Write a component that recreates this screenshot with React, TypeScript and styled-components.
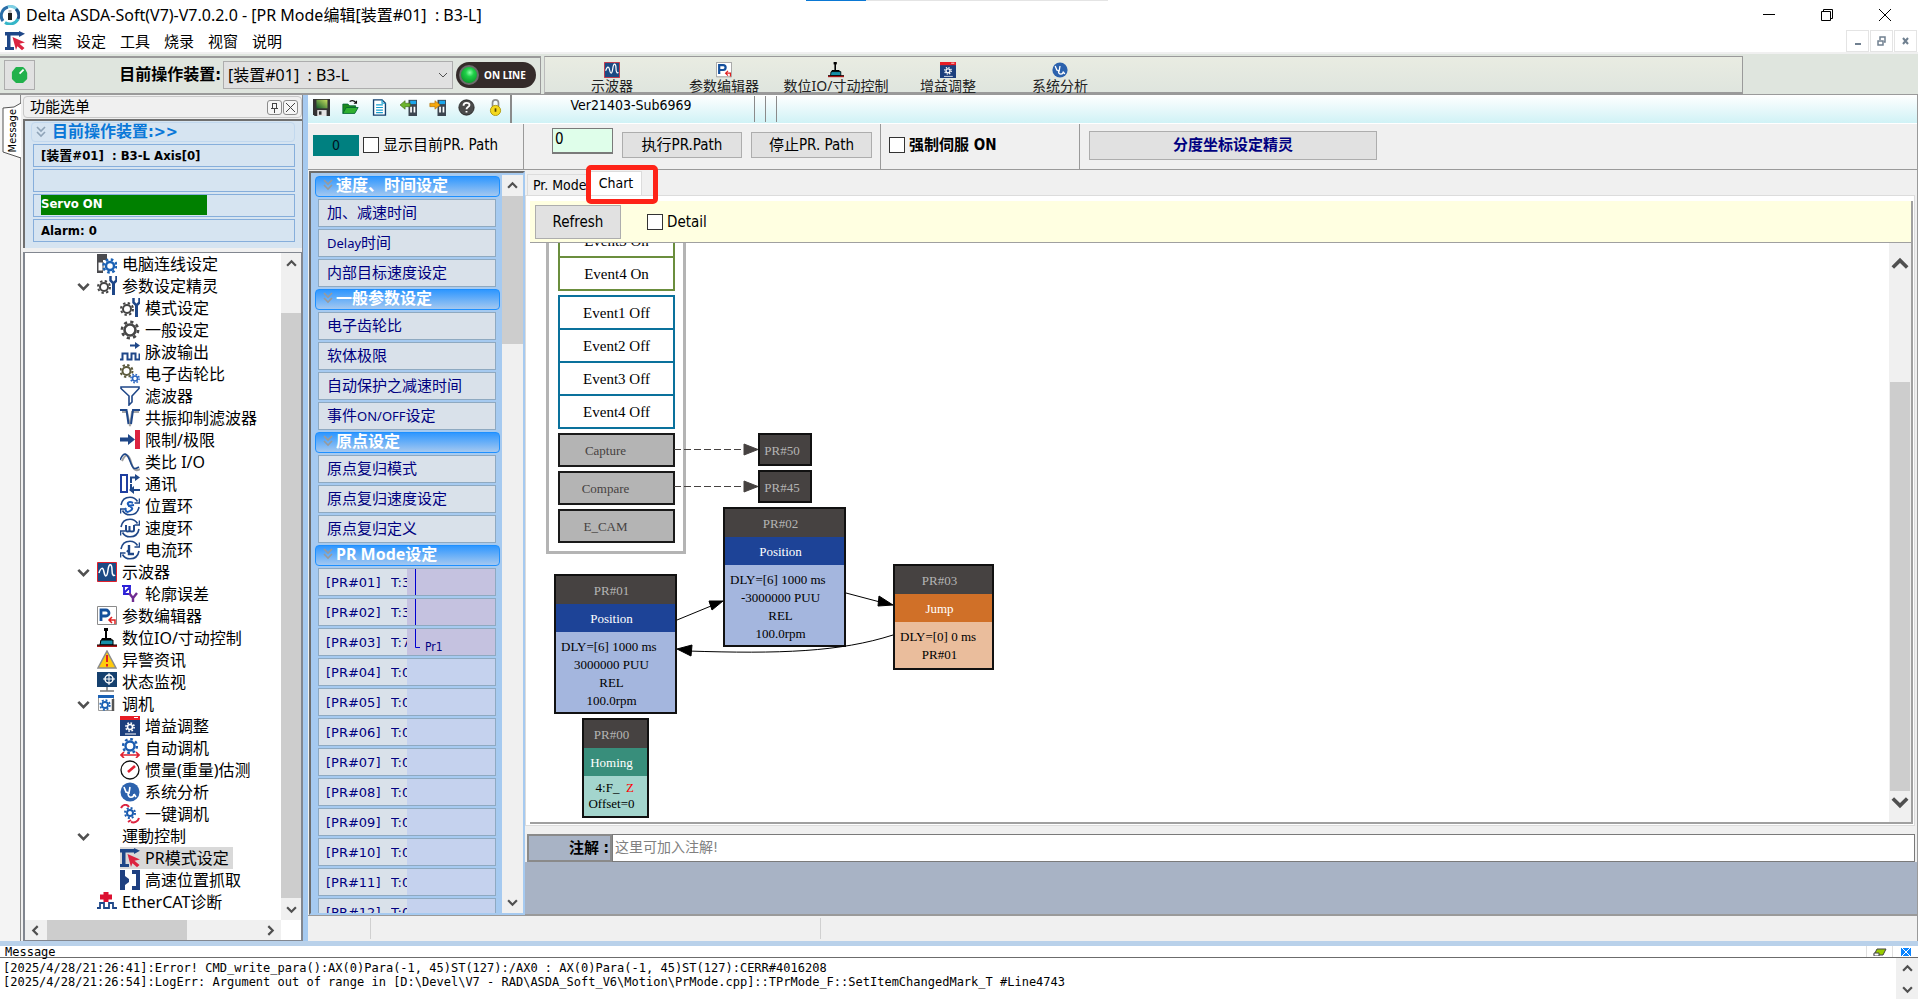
import React from 'react';
import styled, { createGlobalStyle, css } from 'styled-components';

const UI = `'DejaVu Sans Condensed', 'Noto Sans', 'Noto Sans CJK SC', sans-serif`;
const SANS = `'Noto Sans', 'Noto Sans CJK SC', sans-serif`;
const SERIF = `'Liberation Serif', serif`;
const MONO = `'DejaVu Sans Mono', 'Noto Sans CJK SC', monospace`;

const GlobalStyle = createGlobalStyle`
  *, *::before, *::after { box-sizing: border-box; }
  body { margin: 0; background: #f0f0f0; font-family: ${SANS}; font-size: 16px; line-height: 20px; color: #000; }
  button, input, select { font: inherit; color: inherit; border-radius: 0; margin: 0; padding: 0; }
  ul { list-style: none; margin: 0; padding: 0; }
  svg { display: block; flex: none; }
`;

/* ---------- icons ---------- */

const Gear = ({ cx, cy, r, c, w = 2 }: { cx: number; cy: number; r: number; c: string; w?: number }) => (
  <g fill="none" stroke={c}>
    <circle cx={cx} cy={cy} r={r} strokeWidth={w} />
    <circle cx={cx} cy={cy} r={r + w} strokeWidth={w} strokeDasharray={`${((r + w) * Math.PI) / 8} ${((r + w) * Math.PI) / 8}`} />
  </g>
);

const NAVY = '#1f4788';

const Loop = ({ children }: { children: React.ReactNode }) => (
  <g fill="none" stroke={NAVY} strokeWidth="1.6">
    <path d="M1 9C2 3.500 6 1.200 10 1.200c3.500 0 6 1.600 7.500 4.300M19.500 2.500v4.500h-5M19 11c-1 5.500-5 7.800-9 7.800-3.500 0-6-1.600-7.500-4.300M.5 17.500V13h5" />
    {children}
  </g>
);

const icons: Record<string, React.ReactNode> = {
  pc: (<><path d="M0 0h10v6H6v13H0z" fill="#4a4a4e" /><path d="M1 8h5v9H1z" fill="#fff" stroke="#4a4a4e" /><Gear cx={13} cy={12} r={4} c="#1b62b5" w={2.500} /></>),
  wizard: (<><Gear cx={7} cy={11} r={4} c="#454545" /><path d="M16.500 7v12" stroke={NAVY} strokeWidth="3" /><path d="M13.500 0v4.500l3 3 3-3V0" fill="none" stroke={NAVY} strokeWidth="2.500" /></>),
  gear: <Gear cx={10} cy={10} r={5.500} c="#474747" w={2.600} />,
  pulse: (<><path d="M0 17.500h2.500v-6h5v6h4v-6h4v6h4v-6" fill="none" stroke={NAVY} strokeWidth="2" /><path d="M10 2.500h5V0l5 3.500L15 7V4.500h-5z" fill={NAVY} /></>),
  gears: (<><Gear cx={6.500} cy={7} r={4} c="#5c5a3c" /><Gear cx={15} cy={14.500} r={2.500} c="#2a65c0" w={1.600} /></>),
  filter: <path d="M1 1h18v1.500L12 10v6l-3 3v-9L1 2.500z" fill="#fff" stroke={NAVY} strokeWidth="1.600" />,
  notch: (<><path d="M2 4h5l3 14 2-14h7" fill="none" stroke="#a8a8a8" strokeWidth="2" /><path d="M0 2h6.500L8.500 16M20 2h-7L11 16" fill="none" stroke={NAVY} strokeWidth="2" /></>),
  limit: (<><path d="M0 7.500h8V4l7 5.500L8 15v-3.500H0z" fill={NAVY} /><path d="M15 0h5v19h-5z" fill="#dc2440" /></>),
  sine: (<><path d="M2 9c4-9 7-6 9 1s4 10 9 7" fill="none" stroke="#a0a0a0" strokeWidth="2" /><path d="M0 8C4-1 7 1 10 9s4 9 9 6" fill="none" stroke={NAVY} strokeWidth="1.600" /></>),
  comm: (<><path d="M1 1h6v17H1z" fill="#fff" stroke="#1f3fa0" strokeWidth="2" /><path d="M11 9V3.500h5M11 10v6h9" fill="none" stroke={NAVY} strokeWidth="2" /><path d="M15 0l5 3.500L15 7zM14 12l-5 4 5 4z" fill={NAVY} /></>),
  posLoop: <Loop><path d="M13 7c-4-2-7 0-4 2.500s5 3 1 5.500-5-1-4-3M8 10l6-1" strokeWidth="2" stroke="#1b5cb8" /></Loop>,
  spdLoop: <Loop><path d="M6 7v5c0 2 3.500 2 3.500 0V8M9.500 12c0 2 4.500 2 4.500 0V7" strokeWidth="2" /></Loop>,
  curLoop: <Loop><path d="M9 5v9h5M9 14v-4l-2 2" strokeWidth="2.400" /></Loop>,
  scope: (<><path d="M.5.500h19v19H.5z" fill="#1c4a84" stroke="#e0202c" /><path d="M2 11c2-6 4-6 5-1s3 6 4-2 4-6 4 0 2 6 3 5" fill="none" stroke="#fff" strokeWidth="1.500" /></>),
  contour: (<><path d="M2 2h9M3 10h8M4 2v8M10 2v8M4 9l6-6" fill="none" stroke="#2b20d8" strokeWidth="1.800" /><path d="M9 9l4 5 4-5M13 13v5" fill="none" stroke="#6f2c91" strokeWidth="2.400" /></>),
  param: (<><path d="M.5.500h19v18H.5z" fill="#fff" stroke="#8b8b8b" /><path d="M4 15V4h5a2.500 2.500 0 0 1 0 6H4" fill="none" stroke="#14509c" strokeWidth="2.800" /><path d="M18 18v-4h-5m2-3l-3 3 3 3" fill="none" stroke="#e02020" strokeWidth="1.500" /></>),
  io: (<><path d="M9 1v9" stroke="#000" strokeWidth="2" /><path d="M7 0h4v3H7z" /><path d="M5 10h9l2 4H3z" /><path d="M4 12h12v5H3z" fill="#1490a8" stroke="#000" /><path d="M0 18h20" stroke="#b01818" strokeWidth="2" /><path d="M0 17h20" stroke="#000" /></>),
  alarm: (<><path d="M10 1l9 17H1z" fill="#ffcb0b" stroke="#8c8c8c" strokeWidth="1.500" /><path d="M10 5v7m0 2v2.500" stroke="#e02020" strokeWidth="2" /></>),
  monitor: (<><path d="M0 0h20v15H0z" fill="#15406e" /><circle cx="12" cy="7" r="4" fill="none" stroke="#fff" strokeWidth="1.500" /><path d="M12 1v12M6 7h12" stroke="#fff" /><path d="M10 15v4M3 19h14" stroke="#777" strokeWidth="1.500" /></>),
  tune: (<><path d="M1.500 1.500h15v15h-15z" fill="#fff" stroke="#999" /><path d="M1 1h16v3H1z" fill="#1b62b5" /><Gear cx={8} cy={11} r={3} c="#1b62b5" w={1.800} /><path d="M16 5v12" stroke="#555" strokeWidth="2.500" /></>),
  gain: (<><path d="M0 0h20v20H0z" fill="#1c3f7d" /><path d="M0 0h20v4H0z" fill="#e81c24" /><path d="M14 1.500h4" stroke="#fff" /><Gear cx={10} cy={11} r={2.500} c="#fff" w={1.600} /><path d="M5 18h11" stroke="#fff" /></>),
  auto: (<><Gear cx={10} cy={8} r={4.500} c="#1b5cb0" w={2.400} /><path d="M1 17h18M4 14l-3 3 3 3M16 14l3 3-3 3" fill="none" stroke="#e02030" strokeWidth="1.600" /></>),
  inertia: (<><circle cx="10" cy="10" r="9" fill="#fff" stroke="#111" strokeWidth="1.300" /><path d="M8 12l7-6" stroke="#e02030" strokeWidth="2.600" /></>),
  analysis: (<><circle cx="10" cy="10" r="9.500" fill="#2c62ad" /><path d="M4 5l2 5 3 1 1-6M8 11c0 6 6 5 6 1m0 0l2 3" fill="none" stroke="#fff" strokeWidth="1.600" /></>),
  oneKey: (<><Gear cx={10} cy={9} r={3} c="#1b5cb0" w={2} /><path d="M1 4C3 0 7 0 9 3M19 14c-1 4-5 5-8 4M8 18l3-2" fill="none" stroke="#dc2440" strokeWidth="2" /></>),
  pr: (<><path d="M0 1h16v3.500H5.500V16H9v3H0v-3h2V4.500H0z" fill={NAVY} /><path d="M14 0l6 2.800L14 6z" fill={NAVY} /><path d="M7.500 6L20 11.500l-5.500 1.200 5 4.300-2.500 2.200-4.600-4L11 19z" fill="#dc2440" /></>),
  capture: (<><path d="M0 0h5v6l4 3v3l-4 3v5H0z" fill="#1f4080" /><path d="M12 2h6v16h-6" fill="none" stroke="#1f4080" strokeWidth="4" /></>),
  ethercat: (<><path d="M9 0v10M3 5h12" stroke="#dc1030" strokeWidth="5" /><path d="M0 16h3v-5h4v5h5v-5h4v5h4" fill="none" stroke={NAVY} strokeWidth="1.800" /></>),
  save: (
    <>
      <defs><linearGradient id="disk" x1="0" y1="1" x2="1" y2="0"><stop offset="0" stopColor="#0f5a2a" /><stop offset="1" stopColor="#c8e060" /></linearGradient></defs>
      <path d="M0 0h20v20H2l-2-2z" fill="#333" /><path d="M4 1h13v10H4z" fill="url(#disk)" /><path d="M5 13h11v7H5z" fill="#e4e4e4" /><path d="M7 14.500h3v4H7z" fill="#333" />
    </>
  ),
  open: (<><path d="M1 17V6h6l2 2h7v3" fill="#1d8a1d" stroke="#063" /><path d="M1 17l4-7h14l-4 7z" fill="#30b030" stroke="#063" /><path d="M9 3c3-2 6-1 8 2m0-3v3h-3" fill="none" stroke="#111" strokeWidth="1.400" /></>),
  doc: (<><path d="M3 1h10l4 4v14H3z" fill="#fff" stroke="#12406f" strokeWidth="1.600" /><path d="M13 1v4h4M6 7h8M6 10h8M6 13h8M6 16h8" fill="none" stroke="#18a0d0" strokeWidth="1.400" /></>),
  readIn: (<><path d="M10 1h10v19H10z" fill="#3d4650" /><path d="M12 2h7v4h-7z" fill="#1aa7ec" /><path d="M12 9h2v7h-2zM16 9h2v7h-2z" fill="#fff" /><path d="M0 7l6-5v3h6v4H6v3z" fill="#6cb52d" stroke="#3c6414" strokeWidth=".7" /></>),
  writeOut: (<><path d="M10 1h10v19H10z" fill="#3d4650" /><path d="M12 2h7v4h-7z" fill="#1aa7ec" /><path d="M12 9h2v7h-2zM16 9h2v7h-2z" fill="#fff" /><path d="M13 7L7 2v3H1v4h6v3z" fill="#f5a80c" stroke="#a60" strokeWidth=".7" /></>),
  help: (<><circle cx="10" cy="10" r="9" fill="#4a4a4a" stroke="#222" /><path d="M6.500 8c0-5 7-4 7-1 0 2.500-3.500 2.500-3.500 5m0 2v2" fill="none" stroke="#fff" strokeWidth="2.200" /></>),
  lock: (<><path d="M6.500 9V4.500a3.500 3.500 0 0 1 7 0V9" fill="none" stroke="#8c8c8c" strokeWidth="2" /><circle cx="10" cy="13.500" r="6" fill="#f4d81c" stroke="#a89000" /><path d="M10 11v4" stroke="#554400" strokeWidth="2" /></>),
  logo: (<><path d="M8 2A9 9 0 0 0 3 16" fill="none" stroke="#2a6ea8" strokeWidth="3" /><path d="M5 17.500A9 9 0 0 0 18 14" fill="none" stroke="#35b6c8" strokeWidth="3" /><path d="M19 11A9 9 0 0 0 8 1.500" fill="none" stroke="#7fd0e4" strokeWidth="3" /><path d="M16 4a9 9 0 0 1 2 10" fill="none" stroke="#1d5088" strokeWidth="3" /><path d="M10 5v3" stroke="#bbb" strokeWidth="3" /><path d="M10 8v7" stroke="#222" strokeWidth="4" /></>),
  ready: (<><path d="M6 2h7l2 2 2 4v6l-4 4H6l-4-4V7z" fill="#22b14c" stroke="#22b14c" strokeWidth="2" strokeLinejoin="round" /><path d="M9.500 8.500L14 4" stroke="#fff" strokeWidth="2" /></>),
};

const Icon = ({ name, size = 20 }: { name: string; size?: number }) => (
  <svg width={size} height={size} viewBox="0 0 20 20" aria-hidden="true">{icons[name]}</svg>
);

const Chevron = ({ dir, w = 10, s = 2 }: { dir: 'up' | 'down' | 'left' | 'right'; w?: number; s?: number }) => {
  const angle = { down: 0, up: 180, left: 90, right: 270 }[dir];
  return (
    <svg width={w} height={w} viewBox="0 0 10 10" aria-hidden="true">
      <path d="M1 3l4 4 4-4" fill="none" stroke="#505050" strokeWidth={s} transform={`rotate(${angle} 5 5)`} />
    </svg>
  );
};

const DoubleChevron = ({ color }: { color: string }) => (
  <svg width="10" height="12" viewBox="0 0 10 12" aria-hidden="true">
    <path d="M1 1l4 4 4-4M1 6l4 4 4-4" fill="none" stroke={color} strokeWidth="1.600" />
  </svg>
);

/* ---------- window frame ---------- */

const Window = styled.div`
  display: flex; flex-direction: column; height: 100vh; overflow: hidden; background: #fff;
`;
const TitleBar = styled.header`
  position: relative; display: flex; align-items: center; height: 30px; padding-right: 17px; gap: 6px; flex: none;
  h1 { flex: 1; margin: 0; font: 400 16px/20px ${SANS}; white-space: pre; }
`;
const LoadStrip = styled.div`
  position: absolute; top: 0; left: 42%; width: 302px; height: 1px; background: #e4e4e4;
  &::before { content: ''; display: block; width: 60px; height: 1px; background: #0a78d4; }
`;
const WindowButtons = styled.div`display: flex; gap: 26px;`;
const WindowButton = styled.button`
  display: grid; place-items: center; width: 32px; height: 28px; border: 0; background: none;
`;
const MenuBar = styled.nav`
  display: flex; align-items: center; height: 24px; padding-left: 5px; flex: none; border-bottom: 2px solid #f0f0f0;
`;
const MenuList = styled.ul`display: flex; flex: 1; gap: 14px; padding-left: 7px;`;
const MenuItem = styled.button`border: 0; background: none; font: 15px/20px ${UI};`;
const MdiButton = styled.button`
  display: grid; place-items: center; width: 23px; height: 22px; margin-right: 1px; background: #fff; border: 1px solid #e4e4e4;
`;

const ToolStrip = styled.div`
  display: flex; height: 41px; padding-top: 2px; flex: none; background: #dfe5de; border-bottom: 1px solid #9a9a9a;
`;
const DeviceBar = styled.div`
  display: flex; align-items: center; width: 541px; flex: none; padding: 0 4px 2px; background: #dfe5de;
  border: 1px solid #9a9a9a; border-top-width: 2px; border-left: 0;
  label { flex: 1; text-align: right; font: 700 16px/20px ${UI}; padding-right: 2px; }
`;
const ReadyButton = styled.button`
  display: grid; place-items: center; width: 31px; height: 30px; background: #e1e1e1; border: 1px solid #adadad;
`;
const SelectWrap = styled.div`
  position: relative; width: 230px; height: 28px;
  select { appearance: none; width: 100%; height: 100%; padding-left: 4px; background: #e1e1e1; border: 1px solid #adadad; font: 16px/20px ${SANS}; }
  svg { position: absolute; right: 5px; top: 9px; pointer-events: none; }
`;
const OnlinePill = styled.div`
  display: flex; align-items: center; gap: 5px; width: 80px; height: 26px; margin-left: 3px; padding: 0 3px; border-radius: 13px;
  background: #342b2a; color: #fff; font: 700 10px/14px ${SANS}; white-space: nowrap;
`;
const Lamp = styled.span`
  width: 20px; height: 20px; flex: none; border-radius: 50%; border: 2px solid #6c6c6c;
  background: radial-gradient(circle at 55% 35%, #8dffa8, #1fd048 30%, #067a20);
`;
const Launchers = styled.div`
  display: flex; width: 1199px; margin-left: 3px; padding-left: 11px; background: linear-gradient(#e9ece2, #dfe5de);
  border: 1px solid #9a9a9a; border-bottom-width: 2px; border-left: 1px solid #bbb;
`;
const Launcher = styled.button`
  display: flex; flex-direction: column; align-items: center; gap: 1px; width: 112px; padding-top: 5px; border: 0; background: none;
  font: 14px/14px ${SANS}; color: #222; white-space: nowrap;
`;

/* ---------- workspace ---------- */

const Workspace = styled.div`display: flex; flex: 1; min-height: 0;`;
const DockStrip = styled.div`
  width: 21px; flex: none; padding: 7px 0 0 2px; background: #f4f4f4; border-right: 1px solid #8a8a8a;
`;
const DockTab = styled.button`
  position: relative; display: grid; place-items: center; width: 19px; height: 57px; padding-left: 3px; border: 0; background: none;
  span { position: relative; writing-mode: vertical-rl; transform: rotate(180deg); font: 11px/14px 'DejaVu Sans Condensed', sans-serif; }
  svg { position: absolute; inset: 0; }
`;
const Sidebar = styled.aside`
  display: flex; flex-direction: column; width: 281px; flex: none; background: #f0f0f0; padding: 1px 0 0 2px;
`;
const SideHeader = styled.div`
  display: flex; align-items: center; height: 22px; flex: none; padding: 0 3px 0 6px; gap: 1px; border: 1px solid #c8c8c8; border-radius: 4px; background: #f0f0f0;
  h2 { flex: 1; margin: 0; font: 400 15px/20px ${UI}; }
`;
const SmallButton = styled.button`
  display: grid; place-items: center; width: 15px; height: 15px; background: #f6f6f6; border: 1px solid #8c8c8c; border-radius: 3px;
`;
const DeviceCard = styled.section`
  display: flex; flex-direction: column; gap: 2px; height: 129px; flex: none; margin-top: 1px; padding: 1px 7px 4px 6px; background: #d6e4f1;
  border-left: 2px solid #707070; border-top: 2px solid #707070; font: 700 13px/20px ${UI};
  h3 { display: flex; align-items: center; gap: 6px; height: 20px; margin: 0; padding-left: 4px; border: 1px solid #c2d8ee; border-radius: 4px; font: 700 16px/20px ${UI}; color: #0a78d8; }
`;
const DeviceRow = styled.div`
  height: 23px; flex: none; margin-left: 2px; padding: 0 7px; border: 1px solid #86aedb; white-space: pre; line-height: 21px;
`;
const ServoFlag = styled.span`
  display: block; width: 166px; height: 20px; background: #008000; color: #fff; line-height: 18px;
`;

const TreeBox = styled.div`
  display: grid; grid-template: minmax(0, 1fr) 20px / 1fr 20px; flex: 1; min-height: 0; margin-top: 4px; background: #fff;
  border: 1px solid #828790; border-left-width: 2px;
`;
const TreeList = styled.ul`overflow: hidden;`;
const TreeRow = styled.li<{ $level: number }>`
  display: flex; align-items: center; height: 22px; padding-left: ${p => (p.$level === 1 ? 52 : 75)}px;
`;
const Twisty = styled.span`display: grid; width: 20px; place-items: center start;`;
const TreeLabel = styled.button<{ $selected?: boolean }>`
  display: flex; align-items: center; height: 22px; gap: 5px; padding-right: 4px; border: 0; white-space: nowrap;
  background: ${p => (p.$selected ? '#d9d9d9' : 'none')};
  font: 16px/20px ${SANS};
`;

/* ---------- scroll bars ---------- */

const Bar = styled.div<{ $horizontal?: boolean }>`
  display: flex; flex-direction: ${p => (p.$horizontal ? 'row' : 'column')}; background: #f0f0f0; min-height: 0;
  button { display: grid; place-items: center; flex: none; border: 0; background: none; ${p => (p.$horizontal ? 'width: 21px;' : 'height: 21px;')} }
`;
const Track = styled.div<{ $before: number; $size: number; $after: number; $horizontal?: boolean }>`
  display: grid; flex: 1; min-height: 0;
  ${p => p.$horizontal
    ? css`grid-template-columns: ${p.$before}fr ${p.$size}fr ${p.$after}fr;`
    : css`grid-template-rows: ${p.$before}fr ${p.$size}fr ${p.$after}fr;`}
  &::before { content: ''; }
  &::after { content: ''; }
`;
const Thumb = styled.div`background: #cdcdcd;`;

const ScrollBar = ({ horizontal, before, size, after, big }: { horizontal?: boolean; before: number; size: number; after: number; big?: boolean }) => (
  <Bar $horizontal={horizontal}>
    <button aria-label="Scroll back"><Chevron dir={horizontal ? 'left' : 'up'} w={big ? 18 : 11} /></button>
    <Track $before={before} $size={size} $after={after} $horizontal={horizontal}><Thumb /></Track>
    <button aria-label="Scroll forward"><Chevron dir={horizontal ? 'right' : 'down'} w={big ? 18 : 11} /></button>
  </Bar>
);

/* ---------- main pane ---------- */

const VSplit = styled.div`width: 6px; flex: none; background: #a6caf0; border-left: 1px solid #828790;`;
const HSplit = styled.div`height: 5px; flex: none; background: #b9d1ea;`;
const Main = styled.main`
  display: flex; flex: 1; flex-direction: column; min-width: 0; background: #f0f0f0; border-right: 1px solid #9a9a9a;
`;
const VersionRow = styled.div`
  display: flex; height: 29px; flex: none; border-bottom: 1px solid #fff; background: linear-gradient(#fff, #d0f2f6);
`;
const IconTools = styled.div`
  display: flex; gap: 13px; width: 204px; height: 28px; padding: 3px 5px; border-right: 2px solid #8a8a8a;
`;
const IconButton = styled.button`border: 0; background: none; width: 16px; height: 18px;`;
const VersionText = styled.div`width: 242px; padding-right: 4px; text-align: center; font: 14px/20px ${UI};`;
const Ticks = styled.div`
  display: flex; gap: 10px; padding-top: 1px;
  span { width: 1px; height: 26px; background: #8a8a8a; }
`;

const PathRow = styled.div`
  display: flex; height: 46px; flex: none; border-bottom: 1px solid #9a9a9a; font: 15px/20px ${UI};
`;
const PathGroup = styled.div<{ $w?: number; $pad: number; $gap: number }>`
  display: flex; align-items: center; gap: ${p => p.$gap}px; padding: 0 0 3px ${p => p.$pad}px; white-space: nowrap;
  ${p => (p.$w ? css`width: ${p.$w}px; flex: none; border-right: 1px solid #9a9a9a;` : css`flex: 1;`)}
`;
const PathCounter = styled.output`
  width: 46px; height: 21px; margin-right: -4px; background: #008080; text-align: center; font-size: 14px; color: #012;
`;
const Check = styled.label<{ $bold?: boolean }>`
  display: flex; align-items: center; gap: 4px; font-weight: ${p => (p.$bold ? 700 : 400)};
  input { appearance: none; width: 16px; height: 16px; background: #fff; border: 1px solid #333; }
`;
const PathInput = styled.input`
  width: 61px; height: 26px; margin-bottom: 8px; padding: 0 2px 3px; background: #dffeea; border: 1px solid #7a7a7a; border-width: 1px 1px 2px 1px;
`;
const PushButton = styled.button<{ $w: number; $h: number; $strong?: boolean }>`
  width: ${p => p.$w}px; height: ${p => p.$h}px; background: #e1e1e1; border: 1px solid #adadad;
  ${p => p.$strong && css`font-weight: 700; color: #000080;`}
`;

const Body = styled.div`display: flex; flex: 1; min-height: 0; padding-top: 1px; border-bottom: 1px solid #9a9a9a;`;
const NavBox = styled.div`
  display: flex; width: 216px; flex: none; margin-left: 1px; background: #a6caf0; border: 2px solid #a6caf0;
  border-left: 2px solid #6c6c6c; border-top-color: #6c6c6c; padding-top: 2px;
  > :last-child { width: 21px; }
`;
const NavList = styled.div`
  flex: 1; min-width: 0; overflow: hidden; padding: 1px 2px 0 4px; color: #000080; font: 15px/20px ${SANS};
`;
const NavHead = styled.h3`
  display: flex; align-items: center; gap: 3px; height: 21px; margin: 0 0 2px; padding: 0 0 3px 7px; border: 1px solid #1e90ff; border-radius: 4px;
  background: linear-gradient(#2f97ff, #a4c8f0); color: #fff; font: 700 16px/18px ${SANS};
`;
const NavItem = styled.button`
  display: flex; align-items: center; width: 178px; height: 28px; margin: 0 0 2px 3px; border: 1px solid #8ea9c1;
  background: #d9e1ea; white-space: pre; padding: 0 0 2px 8px;
`;
const NavLatin = styled.span`padding-top: 2px; font-size: 13px;`;
const PathItem = styled(NavItem)`padding: 0 0 0 7px; font: 13px/20px 'DejaVu Sans', sans-serif;`;
const PathName = styled.span`width: 65px; padding-top: 2px; text-align: left;`;
const PathType = styled.span`width: 16px; padding-top: 2px; overflow: hidden; text-align: left;`;
const PathLink = styled.span<{ $used?: boolean }>`
  display: flex; align-self: stretch; flex: 1; background: ${p => (p.$used ? '#c5c2e0' : '#c5d2ee')};
  padding-left: 8px; gap: 5px; font: 12px/36px ${UI};
`;

const Pane = styled.div`display: flex; flex: 1; flex-direction: column; min-width: 0;`;
const Tabs = styled.div`
  position: relative; display: flex; align-items: flex-end; height: 24px; padding-left: 2px; flex: none;
`;
const Tab = styled.button<{ $active?: boolean }>`
  width: ${p => (p.$active ? 52 : 63)}px; height: ${p => (p.$active ? 24 : 21)}px; border: 1px solid #dcdcdc; border-bottom: 0;
  background: ${p => (p.$active ? '#fff' : '#f0f0f0')}; font: 14px/20px ${UI}; white-space: nowrap; text-align: ${p => (p.$active ? 'center' : 'left')};
  padding: 0 0 ${p => (p.$active ? 2 : 0)}px ${p => (p.$active ? 0 : 5)}px;
`;
const RedFrame = styled.div`
  position: absolute; left: 61px; top: -6px; width: 72px; height: 39px; border: 5px solid #fe2318; border-radius: 5px; z-index: 1; pointer-events: none;
`;
const TabPanel = styled.section`
  display: flex; flex: 1; min-height: 0; margin-right: 2px; padding: 5px 1px 1px 4px; border: 1px solid #dcdcdc; background: #fff;
`;
const ChartFrame = styled.div`
  display: flex; flex: 1; flex-direction: column; min-width: 0; border: solid #a0a0a0; border-width: 0 2px 2px 0;
`;
const RefreshRow = styled.div`
  display: flex; align-items: center; gap: 26px; height: 42px; flex: none; padding: 0 0 0 5px; background: #ffffe1; border-bottom: 1px solid #a0a0a0;
  font: 15px/20px ${UI};
`;
const ChartRow = styled.div`
  display: flex; flex: 1; min-height: 0;
  > :last-child { width: 22px; padding: 10px 1px 10px; }
`;
const Canvas = styled.div`position: relative; flex: 1; overflow: hidden; font-family: ${SERIF};`;
const Edges = styled.svg`position: absolute; left: 0; top: 0; overflow: visible;`;

const EventGroup = styled.div`
  position: absolute; left: 16px; top: -32px; display: flex; flex-direction: column; gap: 4px; padding: 9px 8px 8px 9px; width: 140px; border: 3px solid #b4b4b4;
`;
const EventStack = styled.div<{ $c: string }>`
  border: 2px solid ${p => p.$c}; border-bottom: 0; width: 117px;
  div { height: 33px; border-bottom: 2px solid ${p => p.$c}; text-align: center; font-size: 15px; line-height: 32px; }
`;
const SourceBox = styled.div`
  width: 117px; height: 34px; border: 2px solid #1a1a1a; background: #b4b4b4; color: #464241; text-align: center; padding-right: 22px; font-size: 13px; line-height: 32px;
`;
const TargetBox = styled.div`
  position: absolute; width: 54px; height: 33px; border: 2px solid #111; background: #464241; color: #b4b4b4; text-align: center; padding-right: 6px; font-size: 13px; line-height: 31px;
`;
const Node = styled.article<{ $x: number; $y: number; $w: number; $h: number; $head: string; $bg: string; $tight?: boolean }>`
  position: absolute; left: ${p => p.$x}px; top: ${p => p.$y}px; width: ${p => p.$w}px; height: ${p => p.$h}px;
  border: 2px solid #111; background: ${p => p.$bg}; text-align: center; font-size: 13px;
  header { height: 28px; padding-right: 8px; line-height: 30px; background: #464241; color: #b4b4b4; }
  h4 { height: 28px; margin: 0; padding-right: 8px; font-size: 13px; font-weight: 400; line-height: 30px; background: ${p => p.$head}; color: #fff; }
  p { margin: 0; padding-right: 8px; line-height: ${p => (p.$tight ? 16 : 18)}px; white-space: pre; }
  h4 + p { margin-top: ${p => (p.$tight ? 4 : 6)}px; ${p => !p.$tight && css`text-align: left; padding: 0 0 0 5px;`} }
  em { font-style: normal; color: #f00; }
`;

const NoteRow = styled.div`
  display: flex; height: 28px; margin: 8px 2px 0 2px; flex: none; font: 15px/20px ${UI};
  label { width: 85px; padding: 2px 1px; background: #a8b3c5; border: 2px solid #8a8a8a; text-align: right; font-weight: 700; }
  input { flex: 1; min-width: 0; padding: 0 2px 3px; background: #fff; border: 1px solid #7a7a7a; font: 14px/20px ${UI}; }
  input::placeholder { color: #808080; opacity: 1; }
`;
const NoteArea = styled.div`height: 53px; flex: none; background: #a8b3c5; border-bottom: 1px solid #9a9a9a;`;
const StatusBar = styled.footer`
  display: flex; height: 25px; flex: none; padding: 2px 0;
  span { border-right: 1px solid #d0d0d0; }
  span:nth-child(1) { width: 63px; }
  span:nth-child(2) { width: 450px; }
`;

const MessagePane = styled.section`
  display: grid; grid-template: 12px 41px / 1fr 22px; height: 53px; flex: none; background: #fff; font: 12px/14px ${MONO};
`;
const MessageHead = styled.div`
  display: flex; grid-column: 1 / 3; align-items: center; padding: 0 0 0 5px; border-bottom: 1px solid #6c6c6c;
  h2 { flex: 1; margin: 0; font: 12px/12px ${MONO}; }
  button { display: grid; place-items: center; width: 26px; height: 11px; border: 0; border-left: 1px solid #e0e0e0; background: none; }
`;
const Log = styled.div`padding: 3px 3px; white-space: pre; overflow: hidden;`;

/* ---------- data ---------- */

const tree: { level: number; label: string; icon?: string; open?: boolean; selected?: boolean }[] = [
  { level: 1, label: '电脑连线设定', icon: 'pc' },
  { level: 1, label: '参数设定精灵', icon: 'wizard', open: true },
  { level: 2, label: '模式设定', icon: 'wizard' },
  { level: 2, label: '一般设定', icon: 'gear' },
  { level: 2, label: '脉波输出', icon: 'pulse' },
  { level: 2, label: '电子齿轮比', icon: 'gears' },
  { level: 2, label: '滤波器', icon: 'filter' },
  { level: 2, label: '共振抑制滤波器', icon: 'notch' },
  { level: 2, label: '限制/极限', icon: 'limit' },
  { level: 2, label: '类比 I/O', icon: 'sine' },
  { level: 2, label: '通讯', icon: 'comm' },
  { level: 2, label: '位置环', icon: 'posLoop' },
  { level: 2, label: '速度环', icon: 'spdLoop' },
  { level: 2, label: '电流环', icon: 'curLoop' },
  { level: 1, label: '示波器', icon: 'scope', open: true },
  { level: 2, label: '轮廓误差', icon: 'contour' },
  { level: 1, label: '参数编辑器', icon: 'param' },
  { level: 1, label: '数位IO/寸动控制', icon: 'io' },
  { level: 1, label: '异警资讯', icon: 'alarm' },
  { level: 1, label: '状态监视', icon: 'monitor' },
  { level: 1, label: '调机', icon: 'tune', open: true },
  { level: 2, label: '增益调整', icon: 'gain' },
  { level: 2, label: '自动调机', icon: 'auto' },
  { level: 2, label: '惯量(重量)估测', icon: 'inertia' },
  { level: 2, label: '系统分析', icon: 'analysis' },
  { level: 2, label: '一键调机', icon: 'oneKey' },
  { level: 1, label: '運動控制', icon: 'none', open: true },
  { level: 2, label: 'PR模式设定', icon: 'pr', selected: true },
  { level: 2, label: '高速位置抓取', icon: 'capture' },
  { level: 1, label: 'EtherCAT诊断', icon: 'ethercat' },
];

const launchers = [
  ['scope', '示波器'], ['param', '参数编辑器'], ['io', '数位IO/寸动控制'], ['gain', '增益调整'], ['analysis', '系统分析'],
];

const tools = [
  ['save', 'Save'], ['open', 'Open'], ['doc', 'New'], ['readIn', 'Read'], ['writeOut', 'Write'], ['help', 'Help'], ['lock', 'Lock'],
];

const navSections = [
  { title: '速度、时间设定', items: ['加、减速时间', 'Delay时间', '内部目标速度设定'] },
  { title: '一般参数设定', items: ['电子齿轮比', '软体极限', '自动保护之减速时间', '事件ON/OFF设定'] },
  { title: '原点设定', items: ['原点复归模式', '原点复归速度设定', '原点复归定义'] },
];

const paths = ['3', '3', '7', '0', '0', '0', '0', '0', '0', '0', '0', '0'];

/* Latin runs in the navigation list are set smaller than the Chinese text. */
const navText = (text: string) =>
  text.split(/([A-Za-z/]+)/).filter(Boolean).map(part =>
    /^[A-Za-z/]+$/.test(part) ? <NavLatin key={part}>{part}</NavLatin> : part);

/* ---------- page ---------- */

export default function App() {
  return (
    <Window>
      <GlobalStyle />
      <TitleBar>
        <LoadStrip />
        <Icon name="logo" />
        <h1>{'Delta ASDA-Soft(V7)-V7.0.2.0 - [PR Mode编辑[装置#01]  : B3-L]'}</h1>
        <WindowButtons>
          <WindowButton aria-label="Minimize"><svg width="14" height="14"><path d="M1 6.500h12" stroke="#000" /></svg></WindowButton>
          <WindowButton aria-label="Restore"><svg width="14" height="14"><path d="M1.500 3.500h9v9h-9zM3.500 3V1.500h9v9H11" fill="none" stroke="#000" /></svg></WindowButton>
          <WindowButton aria-label="Close"><svg width="14" height="14"><path d="M1 1l12 12M13 1L1 13" stroke="#000" /></svg></WindowButton>
        </WindowButtons>
      </TitleBar>

      <MenuBar>
        <Icon name="pr" />
        <MenuList>
          {['档案', '设定', '工具', '烧录', '视窗', '说明'].map(m => <li key={m}><MenuItem>{m}</MenuItem></li>)}
        </MenuList>
        <MdiButton aria-label="Minimize document"><svg width="10" height="10"><path d="M2 8h6" stroke="#708090" strokeWidth="2" /></svg></MdiButton>
        <MdiButton aria-label="Restore document"><svg width="10" height="10"><path d="M1 5h5v4H1zM3 4V1h5v5H7" fill="none" stroke="#708090" strokeWidth="1.500" /></svg></MdiButton>
        <MdiButton aria-label="Close document"><svg width="10" height="10"><path d="M2 2l5 6M7 2L2 8" stroke="#708090" strokeWidth="2" /></svg></MdiButton>
      </MenuBar>

      <ToolStrip>
        <DeviceBar>
          <ReadyButton aria-label="Ready"><Icon name="ready" size={18} /></ReadyButton>
          <label htmlFor="device">目前操作装置:</label>
          <SelectWrap>
            <select id="device"><option>{'[装置#01]\u00a0\u00a0: B3-L'}</option></select>
            <Chevron dir="down" s={1} />
          </SelectWrap>
          <OnlinePill><Lamp />ON LINE</OnlinePill>
        </DeviceBar>
        <Launchers>
          {launchers.map(([icon, label]) => <Launcher key={icon}><Icon name={icon} size={16} />{label}</Launcher>)}
        </Launchers>
      </ToolStrip>

      <Workspace>
        <DockStrip>
          <DockTab>
            <svg width="19" height="57"><path d="M19 1L12 5 1 6v44l18 6" fill="#fff" stroke="#555" /></svg>
            <span>Message</span>
          </DockTab>
        </DockStrip>

        <Sidebar>
          <SideHeader>
            <h2>功能选单</h2>
            <SmallButton aria-label="Pin"><svg width="9" height="11"><path d="M2.500 1v5M6.500 1v5M2 1.500h5M1 6.500h7M4.500 7v4" fill="none" stroke="#444" /></svg></SmallButton>
            <SmallButton aria-label="Close panel"><svg width="11" height="11"><path d="M1 1l9 9M10 1l-9 9" stroke="#444" /></svg></SmallButton>
          </SideHeader>
          <DeviceCard>
            <h3><DoubleChevron color="#8fa4b8" />目前操作装置:&gt;&gt;</h3>
            <DeviceRow>{'[装置#01]  : B3-L Axis[0]'}</DeviceRow>
            <DeviceRow />
            <DeviceRow><ServoFlag>Servo ON</ServoFlag></DeviceRow>
            <DeviceRow>Alarm: 0</DeviceRow>
          </DeviceCard>
          <TreeBox>
            <TreeList>
              {tree.map(n => (
                <TreeRow key={n.label} $level={n.level}>
                  <Twisty>{n.open && <Chevron dir="down" w={13} />}</Twisty>
                  <TreeLabel $selected={n.selected}>
                    <Icon name={n.icon || 'none'} />
                    {n.label}
                  </TreeLabel>
                </TreeRow>
              ))}
            </TreeList>
            <ScrollBar before={39} size={584} after={1} />
            <ScrollBar horizontal before={1} size={142} after={74} />
          </TreeBox>
        </Sidebar>

        <VSplit />

        <Main>
          <VersionRow>
            <IconTools>
              {tools.map(([icon, label]) => <IconButton key={icon} aria-label={label}><Icon name={icon} size={17} /></IconButton>)}
            </IconTools>
            <VersionText>Ver21403-Sub6969</VersionText>
            <Ticks><span /><span /><span /></Ticks>
          </VersionRow>

          <PathRow>
            <PathGroup $w={216} $pad={5} $gap={8}>
              <PathCounter>0</PathCounter>
              <Check><input type="checkbox" />显示目前PR. Path</Check>
            </PathGroup>
            <PathGroup $w={357} $pad={28} $gap={9}>
              <PathInput defaultValue="0" aria-label="PR path number" />
              <PushButton $w={120} $h={26}>执行PR.Path</PushButton>
              <PushButton $w={121} $h={26}>停止PR. Path</PushButton>
            </PathGroup>
            <PathGroup $w={199} $pad={8} $gap={0}>
              <Check $bold><input type="checkbox" />强制伺服 ON</Check>
            </PathGroup>
            <PathGroup $pad={9} $gap={0}>
              <PushButton $w={288} $h={29} $strong>分度坐标设定精灵</PushButton>
            </PathGroup>
          </PathRow>

          <Body>
            <NavBox>
              <NavList>
                {navSections.map(s => (
                  <React.Fragment key={s.title}>
                    <NavHead><DoubleChevron color="#9a9a9a" />{s.title}</NavHead>
                    {s.items.map(i => <NavItem key={i}>{navText(i)}</NavItem>)}
                  </React.Fragment>
                ))}
                <NavHead><DoubleChevron color="#9a9a9a" />PR Mode设定</NavHead>
                {paths.map((t, i) => (
                  <PathItem key={i}>
                    <PathName>{`[PR#${String(i + 1).padStart(2, '0')}]`}</PathName>
                    <PathType>{`T:${t}`}</PathType>
                    <PathLink $used={i < 3}>
                      {i < 3 && <svg width="5" height="26"><path d={i < 2 ? 'M.5 0v26' : 'M.5 0v18.500h5'} fill="none" stroke="#0000d0" /></svg>}
                      {i === 2 && 'Pr1'}
                    </PathLink>
                  </PathItem>
                ))}
              </NavList>
              <ScrollBar before={0} size={148} after={546} />
            </NavBox>

            <Pane>
              <Tabs>
                <Tab>Pr. Mode</Tab>
                <Tab $active>Chart</Tab>
                <RedFrame />
              </Tabs>
              <TabPanel>
                <ChartFrame>
                  <RefreshRow>
                    <PushButton $w={86} $h={34}>Refresh</PushButton>
                    <Check><input type="checkbox" />Detail</Check>
                  </RefreshRow>
                  <ChartRow>
                    <Canvas>
                      <EventGroup>
                        <EventStack $c="#6b8e3d">
                          {[3, 4].map(n => <div key={n}>Event{n} On</div>)}
                        </EventStack>
                        <EventStack $c="#0a719c">
                          {[1, 2, 3, 4].map(n => <div key={n}>Event{n} Off</div>)}
                        </EventStack>
                        <SourceBox>Capture</SourceBox>
                        <SourceBox>Compare</SourceBox>
                        <SourceBox>E_CAM</SourceBox>
                      </EventGroup>
                      <TargetBox style={{ left: 228, top: 190 }}>PR#50</TargetBox>
                      <TargetBox style={{ left: 228, top: 227 }}>PR#45</TargetBox>
                      <Node $x={24} $y={331} $w={123} $h={140} $head="#1d4397" $bg="#a4b6de">
                        <header>PR#01</header><h4>Position</h4>
                        <p>DLY=[6] 1000 ms</p><p>3000000 PUU</p><p>REL</p><p>100.0rpm</p>
                      </Node>
                      <Node $x={193} $y={264} $w={123} $h={140} $head="#1d4397" $bg="#a4b6de">
                        <header>PR#02</header><h4>Position</h4>
                        <p>DLY=[6] 1000 ms</p><p>-3000000 PUU</p><p>REL</p><p>100.0rpm</p>
                      </Node>
                      <Node $x={363} $y={321} $w={101} $h={106} $head="#d07028" $bg="#eabd9c">
                        <header>PR#03</header><h4>Jump</h4>
                        <p>DLY=[0] 0 ms</p><p>PR#01</p>
                      </Node>
                      <Node $x={52} $y={475} $w={67} $h={100} $head="#388e7b" $bg="#a3d5cd" $tight>
                        <header>PR#00</header><h4>Homing</h4>
                        <p>  4:F_  <em>Z</em></p><p>Offset=0</p>
                      </Node>
                      <Edges width="480" height="580">
                        <g fill="none" stroke="#464241">
                          <path d="M144 206.500H216M144 243.500H216" strokeDasharray="7 3" />
                          <path d="M214 201l14 5.500-14 5.500zM214 238l14 5.500-14 5.500z" fill="#464241" />
                        </g>
                        <g fill="none" stroke="#000">
                          <path d="M147 377l34-14M316 350l34 9M363 392C310 409 250 411 158 408" />
                          <path d="M179 358l14 0-11 9zM349 353l14 9-15 1zM162 402l-15 4 14 7z" fill="#000" />
                        </g>
                      </Edges>
                    </Canvas>
                    <ScrollBar big before={108} size={407} after={0} />
                  </ChartRow>
                </ChartFrame>
              </TabPanel>
              <NoteRow>
                <label htmlFor="note">注解 :</label>
                <input id="note" placeholder="这里可加入注解!" />
              </NoteRow>
              <NoteArea />
            </Pane>
          </Body>
          <StatusBar><span /><span /></StatusBar>
        </Main>
      </Workspace>

      <HSplit />
      <MessagePane>
        <MessageHead>
          <h2>Message</h2>
          <button aria-label="Clear messages"><svg width="14" height="8"><path d="M4 1h9l-3 6H1z" fill="#9c0" stroke="#444" /><path d="M1 5h5v3H1z" fill="#fff" stroke="#444" /></svg></button>
          <button aria-label="Close messages"><svg width="10" height="8"><path d="M0 0h10v8H0z" fill="#0a84ff" /><path d="M1 0l8 8M9 0L1 8" stroke="#fff" /></svg></button>
        </MessageHead>
        <Log>
          {'[2025/4/28/21:26:41]:Error! CMD_write_para():AX(0)Para(-1, 45)ST(127):/AX0 : AX(0)Para(-1, 45)ST(127):CERR#4016208\n'}
          {'[2025/4/28/21:26:54]:LogErr: Argument out of range in [D:\\Devel\\V7 - RAD\\ASDA_Soft_V6\\Motion\\PrMode.cpp]::TPrMode_F::SetItemChangedMark_T #Line4743'}
        </Log>
        <ScrollBar before={0} size={0} after={0} />
      </MessagePane>
    </Window>
  );
}
